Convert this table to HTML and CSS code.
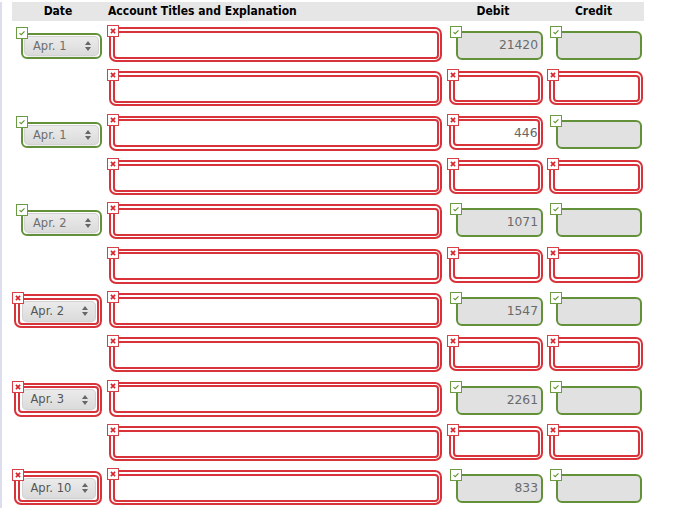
FILE: index.html
```html
<!DOCTYPE html>
<html>
<head>
<meta charset="utf-8">
<link rel="stylesheet" href="styles.css">
</head>
<body>
<div class="page">
  <div class="head">
    <div class="h-date">Date</div>
    <div class="h-acct">Account Titles and Explanation</div>
    <div class="h-num">Debit</div>
    <div class="h-num">Credit</div>
  </div>

  <div class="line">
    <div class="cell"><div class="date good"><span class="badge b-ok"><svg viewBox="0 0 12 12"><polyline points="3,6.2 5,8 9,4"/></svg></span><div class="sel">Apr. 1<i class="arr"></i></div></div></div>
    <div class="cell"><div class="acct wrong"><span class="badge b-bad"><svg viewBox="0 0 12 12"><path d="M3.5 3.5L8.5 8.5M8.5 3.5L3.5 8.5"/></svg></span><div class="in"></div></div></div>
    <div class="cell"><div class="num good"><span class="badge b-ok"><svg viewBox="0 0 12 12"><polyline points="3,6.2 5,8 9,4"/></svg></span>21420</div></div>
    <div class="cell"><div class="num good cr"><span class="badge b-ok"><svg viewBox="0 0 12 12"><polyline points="3,6.2 5,8 9,4"/></svg></span></div></div>
  </div>

  <div class="line">
    <div class="cell"></div>
    <div class="cell"><div class="acct wrong"><span class="badge b-bad"><svg viewBox="0 0 12 12"><path d="M3.5 3.5L8.5 8.5M8.5 3.5L3.5 8.5"/></svg></span><div class="in"></div></div></div>
    <div class="cell"><div class="num wrong"><span class="badge b-bad"><svg viewBox="0 0 12 12"><path d="M3.5 3.5L8.5 8.5M8.5 3.5L3.5 8.5"/></svg></span><div class="in"></div></div></div>
    <div class="cell"><div class="num wrong cr"><span class="badge b-bad"><svg viewBox="0 0 12 12"><path d="M3.5 3.5L8.5 8.5M8.5 3.5L3.5 8.5"/></svg></span><div class="in"></div></div></div>
  </div>

  <div class="line">
    <div class="cell"><div class="date good"><span class="badge b-ok"><svg viewBox="0 0 12 12"><polyline points="3,6.2 5,8 9,4"/></svg></span><div class="sel">Apr. 1<i class="arr"></i></div></div></div>
    <div class="cell"><div class="acct wrong"><span class="badge b-bad"><svg viewBox="0 0 12 12"><path d="M3.5 3.5L8.5 8.5M8.5 3.5L3.5 8.5"/></svg></span><div class="in"></div></div></div>
    <div class="cell"><div class="num wrong"><span class="badge b-bad"><svg viewBox="0 0 12 12"><path d="M3.5 3.5L8.5 8.5M8.5 3.5L3.5 8.5"/></svg></span><div class="in">446</div></div></div>
    <div class="cell"><div class="num good cr"><span class="badge b-ok"><svg viewBox="0 0 12 12"><polyline points="3,6.2 5,8 9,4"/></svg></span></div></div>
  </div>

  <div class="line">
    <div class="cell"></div>
    <div class="cell"><div class="acct wrong"><span class="badge b-bad"><svg viewBox="0 0 12 12"><path d="M3.5 3.5L8.5 8.5M8.5 3.5L3.5 8.5"/></svg></span><div class="in"></div></div></div>
    <div class="cell"><div class="num wrong"><span class="badge b-bad"><svg viewBox="0 0 12 12"><path d="M3.5 3.5L8.5 8.5M8.5 3.5L3.5 8.5"/></svg></span><div class="in"></div></div></div>
    <div class="cell"><div class="num wrong cr"><span class="badge b-bad"><svg viewBox="0 0 12 12"><path d="M3.5 3.5L8.5 8.5M8.5 3.5L3.5 8.5"/></svg></span><div class="in"></div></div></div>
  </div>

  <div class="line">
    <div class="cell"><div class="date good"><span class="badge b-ok"><svg viewBox="0 0 12 12"><polyline points="3,6.2 5,8 9,4"/></svg></span><div class="sel">Apr. 2<i class="arr"></i></div></div></div>
    <div class="cell"><div class="acct wrong"><span class="badge b-bad"><svg viewBox="0 0 12 12"><path d="M3.5 3.5L8.5 8.5M8.5 3.5L3.5 8.5"/></svg></span><div class="in"></div></div></div>
    <div class="cell"><div class="num good"><span class="badge b-ok"><svg viewBox="0 0 12 12"><polyline points="3,6.2 5,8 9,4"/></svg></span>1071</div></div>
    <div class="cell"><div class="num good cr"><span class="badge b-ok"><svg viewBox="0 0 12 12"><polyline points="3,6.2 5,8 9,4"/></svg></span></div></div>
  </div>

  <div class="line">
    <div class="cell"></div>
    <div class="cell"><div class="acct wrong"><span class="badge b-bad"><svg viewBox="0 0 12 12"><path d="M3.5 3.5L8.5 8.5M8.5 3.5L3.5 8.5"/></svg></span><div class="in"></div></div></div>
    <div class="cell"><div class="num wrong"><span class="badge b-bad"><svg viewBox="0 0 12 12"><path d="M3.5 3.5L8.5 8.5M8.5 3.5L3.5 8.5"/></svg></span><div class="in"></div></div></div>
    <div class="cell"><div class="num wrong cr"><span class="badge b-bad"><svg viewBox="0 0 12 12"><path d="M3.5 3.5L8.5 8.5M8.5 3.5L3.5 8.5"/></svg></span><div class="in"></div></div></div>
  </div>

  <div class="line">
    <div class="cell"><div class="date wrong"><span class="badge b-bad"><svg viewBox="0 0 12 12"><path d="M3.5 3.5L8.5 8.5M8.5 3.5L3.5 8.5"/></svg></span><div class="in"><div class="sel">Apr. 2<i class="arr"></i></div></div></div></div>
    <div class="cell"><div class="acct wrong"><span class="badge b-bad"><svg viewBox="0 0 12 12"><path d="M3.5 3.5L8.5 8.5M8.5 3.5L3.5 8.5"/></svg></span><div class="in"></div></div></div>
    <div class="cell"><div class="num good"><span class="badge b-ok"><svg viewBox="0 0 12 12"><polyline points="3,6.2 5,8 9,4"/></svg></span>1547</div></div>
    <div class="cell"><div class="num good cr"><span class="badge b-ok"><svg viewBox="0 0 12 12"><polyline points="3,6.2 5,8 9,4"/></svg></span></div></div>
  </div>

  <div class="line">
    <div class="cell"></div>
    <div class="cell"><div class="acct wrong"><span class="badge b-bad"><svg viewBox="0 0 12 12"><path d="M3.5 3.5L8.5 8.5M8.5 3.5L3.5 8.5"/></svg></span><div class="in"></div></div></div>
    <div class="cell"><div class="num wrong"><span class="badge b-bad"><svg viewBox="0 0 12 12"><path d="M3.5 3.5L8.5 8.5M8.5 3.5L3.5 8.5"/></svg></span><div class="in"></div></div></div>
    <div class="cell"><div class="num wrong cr"><span class="badge b-bad"><svg viewBox="0 0 12 12"><path d="M3.5 3.5L8.5 8.5M8.5 3.5L3.5 8.5"/></svg></span><div class="in"></div></div></div>
  </div>

  <div class="line">
    <div class="cell"><div class="date wrong"><span class="badge b-bad"><svg viewBox="0 0 12 12"><path d="M3.5 3.5L8.5 8.5M8.5 3.5L3.5 8.5"/></svg></span><div class="in"><div class="sel">Apr. 3<i class="arr"></i></div></div></div></div>
    <div class="cell"><div class="acct wrong"><span class="badge b-bad"><svg viewBox="0 0 12 12"><path d="M3.5 3.5L8.5 8.5M8.5 3.5L3.5 8.5"/></svg></span><div class="in"></div></div></div>
    <div class="cell"><div class="num good"><span class="badge b-ok"><svg viewBox="0 0 12 12"><polyline points="3,6.2 5,8 9,4"/></svg></span>2261</div></div>
    <div class="cell"><div class="num good cr"><span class="badge b-ok"><svg viewBox="0 0 12 12"><polyline points="3,6.2 5,8 9,4"/></svg></span></div></div>
  </div>

  <div class="line">
    <div class="cell"></div>
    <div class="cell"><div class="acct wrong"><span class="badge b-bad"><svg viewBox="0 0 12 12"><path d="M3.5 3.5L8.5 8.5M8.5 3.5L3.5 8.5"/></svg></span><div class="in"></div></div></div>
    <div class="cell"><div class="num wrong"><span class="badge b-bad"><svg viewBox="0 0 12 12"><path d="M3.5 3.5L8.5 8.5M8.5 3.5L3.5 8.5"/></svg></span><div class="in"></div></div></div>
    <div class="cell"><div class="num wrong cr"><span class="badge b-bad"><svg viewBox="0 0 12 12"><path d="M3.5 3.5L8.5 8.5M8.5 3.5L3.5 8.5"/></svg></span><div class="in"></div></div></div>
  </div>

  <div class="line">
    <div class="cell"><div class="date wrong"><span class="badge b-bad"><svg viewBox="0 0 12 12"><path d="M3.5 3.5L8.5 8.5M8.5 3.5L3.5 8.5"/></svg></span><div class="in"><div class="sel">Apr. 10<i class="arr"></i></div></div></div></div>
    <div class="cell"><div class="acct wrong"><span class="badge b-bad"><svg viewBox="0 0 12 12"><path d="M3.5 3.5L8.5 8.5M8.5 3.5L3.5 8.5"/></svg></span><div class="in"></div></div></div>
    <div class="cell"><div class="num good"><span class="badge b-ok"><svg viewBox="0 0 12 12"><polyline points="3,6.2 5,8 9,4"/></svg></span>833</div></div>
    <div class="cell"><div class="num good cr"><span class="badge b-ok"><svg viewBox="0 0 12 12"><polyline points="3,6.2 5,8 9,4"/></svg></span></div></div>
  </div>
</div>
</body>
</html>
```
FILE: styles.css
```css
html, body {
  margin: 0;
  padding: 0;
  background: #fff;
  overflow: hidden;
}
body {
  font-family: "DejaVu Sans", Verdana, sans-serif;
}
.page {
  border-left: 2px solid #dcdded;
  height: 508px;
  box-sizing: border-box;
}
.head {
  display: grid;
  grid-template-columns: 92px 339px 100px 101px;
  margin: 2px 0 2px 10px;
  width: 632px;
  height: 19px;
  background: #e6e6e6;
  font-family: "DejaVu Sans Condensed", "DejaVu Sans", sans-serif;
  font-stretch: condensed;
  font-weight: bold;
  font-size: 12px;
  line-height: 19px;
  color: #000;
}
.h-date, .h-num { text-align: center; }
.h-acct { padding-left: 4px; }

.line {
  display: grid;
  grid-template-columns: 104px 339px 100px 101px;
  height: 44.35px;
}
.cell { position: relative; }

.badge {
  position: absolute;
  width: 12px;
  height: 12px;
  box-sizing: border-box;
  background: #fff;
  border: 1px solid;
  z-index: 2;
  display: flex;
}
.badge svg { width: 10px; height: 10px; fill: none; }
.b-ok { border-color: #6b9a45; }
.b-ok svg { stroke: #5f9230; stroke-width: 1.3; }
.b-bad { border-color: #d84048; }
.b-bad svg { stroke: #d8242c; stroke-width: 2; }

.good > .badge { left: -8px; top: -7px; }
.wrong > .badge { left: -4px; top: -4px; }
.date.good > .badge { left: -7px; top: -8px; }

/* red double frame */
.wrong {
  position: relative;
  box-sizing: border-box;
  border: 2px solid #d8333a;
  border-radius: 7px;
  padding: 1.5px;
  background: #fff;
}
.wrong > .in {
  box-sizing: border-box;
  height: 100%;
  border: 2px solid #d8333a;
  border-radius: 4px;
  background: #fff;
  font-size: 12.3px;
  color: #666;
  padding-right: 0;
  display: flex;
  align-items: center;
  justify-content: flex-end;
}

/* green frame */
.good {
  position: relative;
  box-sizing: border-box;
  border: 2px solid #62913a;
  border-radius: 6px;
  background: #e1e1e1;
}

.acct.wrong {
  margin: 4px 0 0 3px;
  width: 333px;
  height: 35px;
}
.num.wrong {
  margin: 4px 0 0 4px;
  width: 94px;
  height: 34px;
}
.num.wrong.cr { width: 94px; }
.num.good {
  margin: 8px 0 0 11px;
  width: 87px;
  height: 29px;
  font-size: 12.3px;
  color: #6a6a6a;
  text-align: right;
  padding-right: 3px;
  line-height: 25px;
}
.num.good.cr { width: 86px; }

.date.good {
  margin: 10px 0 0 19px;
  width: 81px;
  height: 26px;
  padding: 1px;
  background: #fff;
}
.date.wrong {
  margin: 5px 0 0 12px;
  width: 88px;
  height: 34px;
}
.date.wrong > .in { padding: 1px 1px 1px 2px; justify-content: flex-start; }

.sel {
  position: relative;
  box-sizing: border-box;
  width: 75px;
  height: 20px;
  border-radius: 5px;
  background: linear-gradient(#ececec, #dadada);
  box-shadow: inset 0 0 0 1px #d2d2d2, 0 1px 1px rgba(0,0,0,0.08);
  font-family: "DejaVu Sans", sans-serif;
  font-size: 11.5px;
  line-height: 20px;
  color: #6e6e6e;
  padding-left: 9px;
  text-align: left;
}
.date.wrong .sel { color: #555; height: 21px; line-height: 21px; }
.arr {
  position: absolute;
  right: 8px;
  top: 50%;
  width: 6px;
  height: 10px;
  margin-top: -5px;
}
.arr::before, .arr::after {
  content: "";
  position: absolute;
  left: 0;
  border-left: 3px solid transparent;
  border-right: 3px solid transparent;
}
.arr::before { top: 0; border-bottom: 4px solid #666; }
.arr::after { bottom: 0; border-top: 4px solid #666; }
```
